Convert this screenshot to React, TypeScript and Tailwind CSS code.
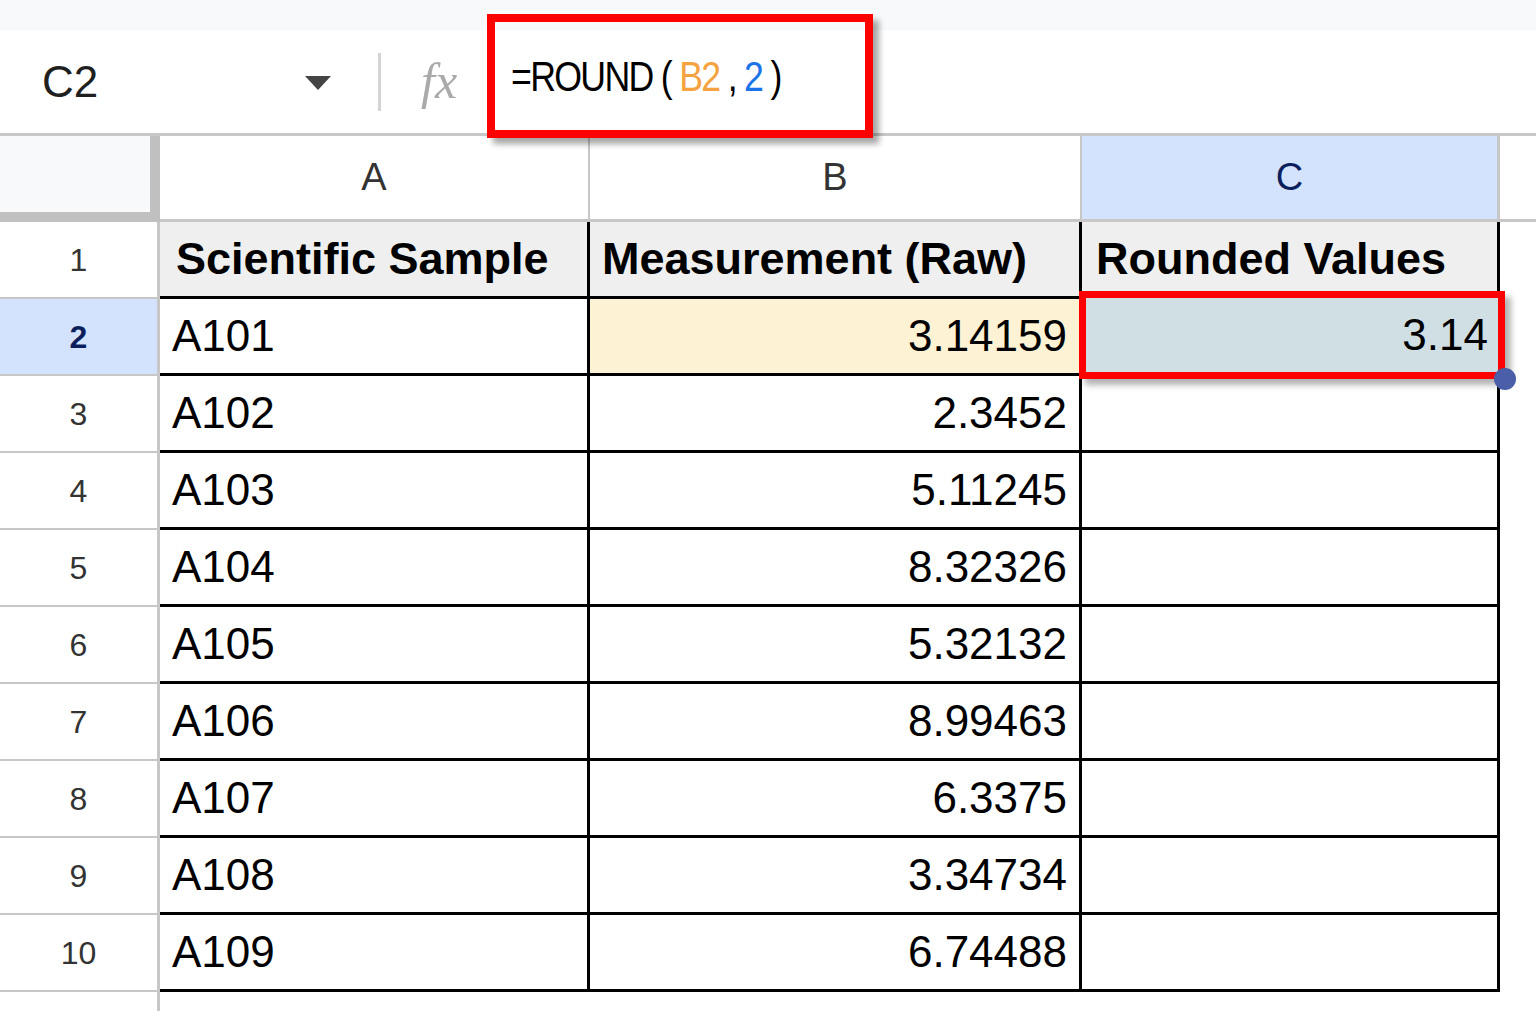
import React from 'react';

const rows: [string, string][] = [
  ['A101', '3.14159'],
  ['A102', '2.3452'],
  ['A103', '5.11245'],
  ['A104', '8.32326'],
  ['A105', '5.32132'],
  ['A106', '8.99463'],
  ['A107', '6.3375'],
  ['A108', '3.34734'],
  ['A109', '6.74488'],
];

export default function App() {
  return (
    <div className="w-[1536px] h-[1011px] overflow-hidden bg-white text-black" style={{ fontFamily: 'Arial, "Liberation Sans", sans-serif' }}>
      <div className="h-[30px] bg-[#f8f9fa]" />
      {/* formula bar */}
      <div className="relative h-[106px] flex items-center border-b-[3px] border-[#c7c7c7]">
        <div className="w-[300px] pl-[42px] text-[44px] text-[#1f1f1f]">C2</div>
        <svg width="30" height="20" viewBox="0 0 30 20" className="ml-[3px]"><path d="M2 4 H28 L15 18 Z" fill="#444" /></svg>
        <div className="ml-[45px] w-[3px] h-[58px] bg-[#d4d4d4]" />
        <div className="ml-[40px] text-[50px] italic text-[#aaa]" style={{ fontFamily: '"Liberation Serif", serif' }}>fx</div>
        <div className="absolute left-[487px] top-[-16px] w-[386px] h-[124px] border-[8px] border-[#ff0000] shadow-[6px_6px_6px_rgba(0,0,0,0.35)] flex items-center pl-[16px] text-[42px] tracking-[-2px]">
          <span className="scale-x-[0.85] origin-left inline-block whitespace-nowrap">=ROUND ( <span className="text-[#f4a340]">B2</span> , <span className="text-[#1a73e8]">2</span> )</span>
        </div>
      </div>
      {/* column headers */}
      <div className="flex h-[86px] text-[38px] text-[#333]">
        <div className="w-[160px] bg-[#f8f9fa] border-r-[10px] border-b-[10px] border-[#c0c0c0]" />
        <div className="w-[430px] flex items-center justify-center border-r-2 border-b-[3px] border-[#c7c7c7]">A</div>
        <div className="w-[492px] flex items-center justify-center border-r-2 border-b-[3px] border-[#c7c7c7]">B</div>
        <div className="w-[418px] flex items-center justify-center bg-[#d3e3fd] border-r-[3px] border-b-[3px] border-[#c7c7c7] text-[#0b1f5c]">C</div>
        <div className="flex-1 border-b-[3px] border-[#c7c7c7]" />
      </div>
      {/* row 1 */}
      <div className="flex h-[77px]">
        <div className="w-[160px] flex items-center justify-center text-[32px] text-[#333] border-r-[3px] border-b-2 border-[#c7c7c7]">1</div>
        <div className="w-[430px] bg-[#efefef] font-bold text-[45px] flex items-center pl-[16px] border-r-[3px] border-b-[3px] border-black whitespace-nowrap">Scientific Sample</div>
        <div className="w-[492px] bg-[#efefef] font-bold text-[45px] flex items-center pl-[12px] border-r-[3px] border-b-[3px] border-black whitespace-nowrap">Measurement (Raw)</div>
        <div className="w-[418px] bg-[#efefef] font-bold text-[45px] flex items-center pl-[14px] border-r-[3px] border-b-[3px] border-black whitespace-nowrap">Rounded Values</div>
        <div className="flex-1" />
      </div>
      {rows.map(([a, b], i) => {
        const sel = i === 0;
        return (
          <div key={a} className="flex h-[77px]">
            <div className={`w-[160px] flex items-center justify-center text-[32px] border-r-[3px] border-b-2 border-[#c7c7c7] ${sel ? 'bg-[#d3e3fd] font-bold text-[#0b1f5c]' : 'text-[#333]'}`}>{i + 2}</div>
            <div className="w-[430px] text-[44px] flex items-center pl-[12px] border-r-[3px] border-b-[3px] border-black">{a}</div>
            <div className={`w-[492px] text-[44px] flex items-center justify-end pr-[12px] border-r-[3px] border-b-[3px] border-black ${sel ? 'bg-[#fef2d4]' : ''}`}>{b}</div>
            <div className="relative w-[418px] text-[44px] flex items-center justify-end pr-[14px] border-r-[3px] border-b-[3px] border-black">
              {sel && (
                <div className="absolute left-[-3px] top-[-8px] w-[426px] h-[88px] border-[7px] border-[#ff0000] shadow-[6px_6px_6px_rgba(0,0,0,0.3)] bg-[#d0dfe3] flex items-center justify-end pr-[10px] z-10">
                  3.14
                  <div className="absolute right-[-18px] bottom-[-18px] w-[22px] h-[22px] rounded-full bg-[#4a5fa8]" />
                </div>
              )}
            </div>
            <div className="flex-1" />
          </div>
        );
      })}
      <div className="flex h-[20px]">
        <div className="w-[160px] border-r-[3px] border-[#c7c7c7]" />
      </div>
    </div>
  );
}
